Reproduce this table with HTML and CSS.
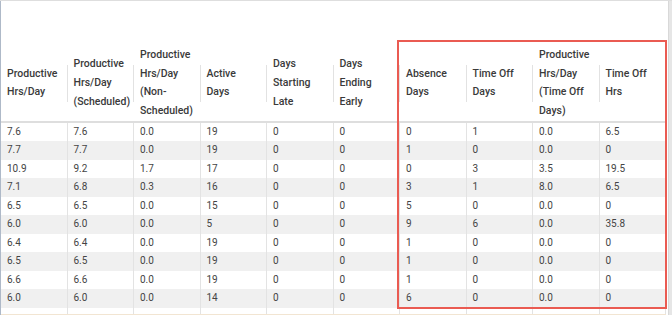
FILE: index.html
```html
<!DOCTYPE html>
<html>
<head>
<meta charset="utf-8">
<link rel="stylesheet" href="styles.css">
</head>
<body>
<div class="page">
  <div class="grid-wrap">
    <div class="table">
      <div class="head">
        <div class="hcell"><span class="hlabel">Productive<br>Hrs/Day</span><span class="sep"></span></div>
        <div class="hcell"><span class="hlabel">Productive<br>Hrs/Day<br>(Scheduled)</span><span class="sep"></span></div>
        <div class="hcell"><span class="hlabel">Productive<br>Hrs/Day<br>(Non-<br>Scheduled)</span><span class="sep"></span></div>
        <div class="hcell"><span class="hlabel">Active<br>Days</span><span class="sep"></span></div>
        <div class="hcell"><span class="hlabel">Days<br>Starting<br>Late</span><span class="sep"></span></div>
        <div class="hcell"><span class="hlabel">Days<br>Ending<br>Early</span><span class="sep"></span></div>
        <div class="hcell"><span class="hlabel">Absence<br>Days</span><span class="sep"></span></div>
        <div class="hcell"><span class="hlabel">Time Off<br>Days</span><span class="sep"></span></div>
        <div class="hcell"><span class="hlabel">Productive<br>Hrs/Day<br>(Time Off<br>Days)</span><span class="sep"></span></div>
        <div class="hcell"><span class="hlabel">Time Off<br>Hrs</span></div>
      </div>
      <div class="row"><div class="cell">7.6</div><div class="cell">7.6</div><div class="cell">0.0</div><div class="cell">19</div><div class="cell">0</div><div class="cell">0</div><div class="cell">0</div><div class="cell">1</div><div class="cell">0.0</div><div class="cell">6.5</div></div>
      <div class="row alt"><div class="cell">7.7</div><div class="cell">7.7</div><div class="cell">0.0</div><div class="cell">19</div><div class="cell">0</div><div class="cell">0</div><div class="cell">1</div><div class="cell">0</div><div class="cell">0.0</div><div class="cell">0</div></div>
      <div class="row"><div class="cell">10.9</div><div class="cell">9.2</div><div class="cell">1.7</div><div class="cell">17</div><div class="cell">0</div><div class="cell">0</div><div class="cell">0</div><div class="cell">3</div><div class="cell">3.5</div><div class="cell">19.5</div></div>
      <div class="row alt"><div class="cell">7.1</div><div class="cell">6.8</div><div class="cell">0.3</div><div class="cell">16</div><div class="cell">0</div><div class="cell">0</div><div class="cell">3</div><div class="cell">1</div><div class="cell">8.0</div><div class="cell">6.5</div></div>
      <div class="row"><div class="cell">6.5</div><div class="cell">6.5</div><div class="cell">0.0</div><div class="cell">15</div><div class="cell">0</div><div class="cell">0</div><div class="cell">5</div><div class="cell">0</div><div class="cell">0.0</div><div class="cell">0</div></div>
      <div class="row alt"><div class="cell">6.0</div><div class="cell">6.0</div><div class="cell">0.0</div><div class="cell">5</div><div class="cell">0</div><div class="cell">0</div><div class="cell">9</div><div class="cell">6</div><div class="cell">0.0</div><div class="cell">35.8</div></div>
      <div class="row"><div class="cell">6.4</div><div class="cell">6.4</div><div class="cell">0.0</div><div class="cell">19</div><div class="cell">0</div><div class="cell">0</div><div class="cell">1</div><div class="cell">0</div><div class="cell">0.0</div><div class="cell">0</div></div>
      <div class="row alt"><div class="cell">6.5</div><div class="cell">6.5</div><div class="cell">0.0</div><div class="cell">19</div><div class="cell">0</div><div class="cell">0</div><div class="cell">1</div><div class="cell">0</div><div class="cell">0.0</div><div class="cell">0</div></div>
      <div class="row"><div class="cell">6.6</div><div class="cell">6.6</div><div class="cell">0.0</div><div class="cell">19</div><div class="cell">0</div><div class="cell">0</div><div class="cell">1</div><div class="cell">0</div><div class="cell">0.0</div><div class="cell">0</div></div>
      <div class="row alt"><div class="cell">6.0</div><div class="cell">6.0</div><div class="cell">0.0</div><div class="cell">14</div><div class="cell">0</div><div class="cell">0</div><div class="cell">6</div><div class="cell">0</div><div class="cell">0.0</div><div class="cell">0</div></div>
      <div class="row stub"><div class="cell"></div><div class="cell"></div><div class="cell"></div><div class="cell"></div><div class="cell"></div><div class="cell"></div><div class="cell"></div><div class="cell"></div><div class="cell"></div><div class="cell"></div></div>
      <div class="footer"></div>
    </div>
    <div class="highlight"></div>
  </div>
  <div class="scroll"></div>
</div>
</body>
</html>
```
FILE: styles.css
```css
html, body {
  margin: 0;
  padding: 0;
  height: 315px;
  overflow: hidden;
  background: #ffffff;
}

.page {
  display: flex;
  height: 315px;
  border-top: 1px solid #dedede;
  box-sizing: border-box;
  font-family: Roboto, "Liberation Sans", sans-serif;
}

.grid-wrap {
  position: relative;
  width: 668px;
  flex: none;
  border-left: 1px solid #aeb9c8;
  box-sizing: border-box;
}

.table {
  width: 665px;
}

.head {
  display: grid;
  grid-template-columns: repeat(10, 1fr);
  height: 119.5px;
  border-bottom: 2px solid #dedede;
}

.hcell {
  display: flex;
  align-items: center;
  padding: 45px 0 0 6px;
}

.hlabel {
  flex: 1;
  font-size: 10.5px;
  line-height: 18.6px;
  font-weight: 500;
  color: #3a3a3a;
}

.sep {
  width: 1px;
  height: 37px;
  background: #e2e2e2;
}

.row {
  display: grid;
  grid-template-columns: repeat(10, 1fr);
  height: 18.5px;
  background: #ffffff;
}

.row.alt {
  background: #f0f0f0;
}

.row.stub {
  height: 6px;
}

.cell {
  padding-left: 6px;
  border-right: 1px solid #e3e3e3;
  font-size: 10px;
  line-height: 18.5px;
  color: #444444;
  white-space: nowrap;
}

.footer {
  height: 12px;
  background: #f2e5d2;
}

.highlight {
  position: absolute;
  left: 396px;
  top: 39px;
  width: 270px;
  height: 269px;
  border: 2px solid #ea5b52;
  box-sizing: border-box;
}

.scroll {
  flex: 1;
  background: #e6e6e6;
  border-left: 1px solid #d8d8d8;
}
```
